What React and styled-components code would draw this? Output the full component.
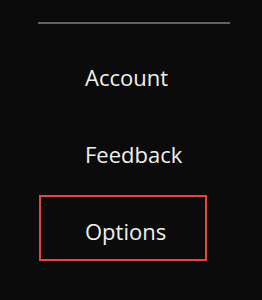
import React from 'react';
import styled, { createGlobalStyle } from 'styled-components';

const GlobalStyle = createGlobalStyle`
	html, body {
		margin: 0;
		padding: 0;
		background-color: #0b0b0b;
	}
`;

const Container = styled.div`
	width: 262px;
	height: 300px;
	background-color: #0b0b0b;
	padding: 22px 0 0 38px;
	box-sizing: border-box;
	font-family: 'Open Sans', 'Noto Sans', sans-serif;
`;

const Divider = styled.div`
	width: 192px;
	height: 2px;
	background-color: #626262;
	margin-bottom: 17px;
`;

const Menu = styled.div`
	display: flex;
	flex-direction: column;
	gap: 11px;
`;

const Item = styled.div`
	box-sizing: border-box;
	width: 168px;
	height: 66px;
	margin-left: 1px;
	padding: 20px 0 0 44px;
	border: 2px solid ${(props) => (props.selected ? '#e64545' : 'transparent')};
	color: #f0f0f0;
	font-size: 22px;
	line-height: 28px;
	cursor: pointer;
`;

const items = ['Account', 'Feedback', 'Options'];

const App = () => {
	return (
		<>
			<GlobalStyle />
			<Container>
				<Divider />
				<Menu>
					{items.map((item) => (
						<Item key={item} selected={item === 'Options'}>
							{item}
						</Item>
					))}
				</Menu>
			</Container>
		</>
	);
};

export default App;
